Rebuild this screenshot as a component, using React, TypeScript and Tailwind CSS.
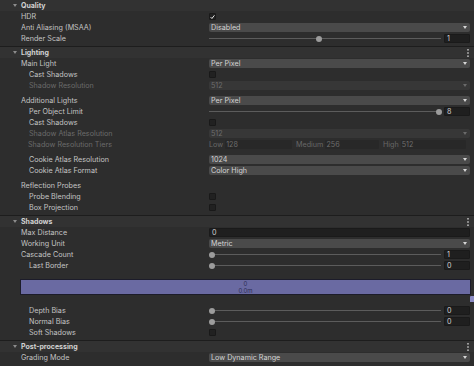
import React from "react";

const LABEL = "text-[#c4c4c4]";
const DIS = "text-[#6b6b6b]";

function Tri() {
  return (
    <svg width="4" height="3" viewBox="0 0 4 3" className="shrink-0">
      <polygon points="0,0 4,0 2,3" fill="#8c8c8c" />
    </svg>
  );
}

function Kebab() {
  return (
    <svg width="2" height="8" viewBox="0 0 2 8" className="ml-auto mr-[5px] shrink-0">
      <rect x="0.3" y="0" width="1.4" height="1.6" fill="#c8c8c8" />
      <rect x="0.3" y="3.2" width="1.4" height="1.6" fill="#c8c8c8" />
      <rect x="0.3" y="6.4" width="1.4" height="1.6" fill="#c8c8c8" />
    </svg>
  );
}

function Header({ title, first, kebab = true }: { title: string; first?: boolean; kebab?: boolean }) {
  return (
    <div
      className={
        first
          ? "flex items-center h-[11px] bg-[#323232] pl-[13px]"
          : "flex items-center h-[12px] mt-[2px] border-t border-[#1d1d1d] bg-[#323232] pl-[13px]"
      }
    >
      <Tri />
      <span className="ml-[4px] font-bold text-[7px] leading-none text-[#d2d2d2]">{title}</span>
      {kebab && <Kebab />}
    </div>
  );
}

function Row({
  label,
  pad,
  disabled,
  children,
}: {
  label: string;
  pad: string;
  disabled?: boolean;
  children?: React.ReactNode;
}) {
  return (
    <div className="flex items-center h-[11px]">
      <div className={"w-[209px] shrink-0 text-[7.2px] leading-none whitespace-nowrap " + pad + " " + (disabled ? DIS : LABEL)}>
        {label}
      </div>
      <div className="flex-1 flex items-center pr-[4px] min-w-0">{children}</div>
    </div>
  );
}

function Arrow({ dim }: { dim?: boolean }) {
  return (
    <svg width="4" height="3" viewBox="0 0 4 3" className="shrink-0">
      <polygon points="0,0 4,0 2,3" fill={dim ? "#6a6a6a" : "#d6d6d6"} />
    </svg>
  );
}

function Dropdown({ value, disabled }: { value: string; disabled?: boolean }) {
  return (
    <div
      className={
        "w-full h-[9px] rounded-[2px] flex items-center justify-between pl-[2px] pr-[3px] text-[7.2px] leading-none " +
        (disabled ? "bg-[#373737] text-[#6e6e6e]" : "bg-[#4a4a4a] text-[#d4d4d4]")
      }
    >
      <span>{value}</span>
      <Arrow dim={disabled} />
    </div>
  );
}

function Check({ checked }: { checked?: boolean }) {
  return (
    <div className="w-[7px] h-[7px] bg-[#212121] border border-[#191919] rounded-[1px] flex items-center justify-center">
      {checked && (
        <svg width="6" height="6" viewBox="0 0 6 6">
          <polyline points="0.8,3.2 2.3,4.8 5.3,1" fill="none" stroke="#e8e8e8" strokeWidth="1.2" />
        </svg>
      )}
    </div>
  );
}

function Field({ value, full }: { value: string; full?: boolean }) {
  return (
    <div
      className={
        (full ? "w-full" : "w-[26px] shrink-0") +
        " h-[9px] bg-[#1f1f1f] border border-[#1a1a1a] rounded-[1px] flex items-center pl-[2px] text-[7.2px] leading-none text-[#d0d0d0]"
      }
    >
      {value}
    </div>
  );
}

function Slider({ value, pos }: { value: string; pos: number }) {
  return (
    <div className="w-full flex items-center gap-[3px]">
      <div className="relative flex-1 h-[9px] flex items-center">
        <div className="w-full h-[1px] bg-[#5c5c5c]" />
        <div
          className="absolute top-[1.5px] w-[6px] h-[6px] rounded-full bg-[#9c9c9c]"
          style={{ left: pos + "px" }}
        />
      </div>
      <Field value={value} />
    </div>
  );
}

function Tier({ label, value }: { label: string; value: string }) {
  return (
    <div className="flex-1 flex items-center min-w-0">
      <span className="text-[7.2px] leading-none text-[#686868] mr-[2px]">{label}</span>
      <div className="flex-1 h-[9px] bg-[#282828] rounded-[1px] flex items-center pl-[1px] text-[7.2px] leading-none text-[#6e6e6e] mr-[4px]">
        {value}
      </div>
    </div>
  );
}

const L1 = "pl-[21px]";
const L2 = "pl-[29px]";

export default function App() {
  return (
    <div
      className="w-[474px] h-[366px] overflow-hidden bg-[#2d2d2d] flex flex-col"
      style={{ fontFamily: "Inter, 'Noto Sans', sans-serif" }}
    >
      <Header title="Quality" first kebab={false} />
      <Row label="HDR" pad={L1}>
        <Check checked />
      </Row>
      <Row label="Anti Aliasing (MSAA)" pad={L1}>
        <Dropdown value="Disabled" />
      </Row>
      <Row label="Render Scale" pad={L1}>
        <Slider value="1" pos={107} />
      </Row>

      <Header title="Lighting" />
      <Row label="Main Light" pad={L1}>
        <Dropdown value="Per Pixel" />
      </Row>
      <Row label="Cast Shadows" pad={L2}>
        <Check />
      </Row>
      <Row label="Shadow Resolution" pad={L2} disabled>
        <Dropdown value="512" disabled />
      </Row>
      <div className="h-[4px] shrink-0" />
      <Row label="Additional Lights" pad={L1}>
        <Dropdown value="Per Pixel" />
      </Row>
      <Row label="Per Object Limit" pad={L2}>
        <Slider value="8" pos={227} />
      </Row>
      <Row label="Cast Shadows" pad={L2}>
        <Check />
      </Row>
      <Row label="Shadow Atlas Resolution" pad={L2} disabled>
        <Dropdown value="512" disabled />
      </Row>
      <Row label="Shadow Resolution Tiers" pad="pl-[28px]" disabled>
        <div className="w-full flex items-center -mr-[4px]">
          <Tier label="Low" value="128" />
          <Tier label="Medium" value="256" />
          <Tier label="High" value="512" />
        </div>
      </Row>
      <div className="h-[4px] shrink-0" />
      <Row label="Cookie Atlas Resolution" pad={L2}>
        <Dropdown value="1024" />
      </Row>
      <Row label="Cookie Atlas Format" pad={L2}>
        <Dropdown value="Color High" />
      </Row>
      <div className="h-[4px] shrink-0" />
      <Row label="Reflection Probes" pad={L1} />
      <Row label="Probe Blending" pad={L2}>
        <Check />
      </Row>
      <Row label="Box Projection" pad={L2}>
        <Check />
      </Row>

      <Header title="Shadows" />
      <Row label="Max Distance" pad={L1}>
        <Field value="0" full />
      </Row>
      <Row label="Working Unit" pad={L1}>
        <Dropdown value="Metric" />
      </Row>
      <Row label="Cascade Count" pad={L1}>
        <Slider value="1" pos={0} />
      </Row>
      <Row label="Last Border" pad={L2}>
        <Slider value="0" pos={0} />
      </Row>

      <div className="mt-[8px] ml-[20px] mr-[3px] h-[16px] shrink-0 bg-[#6a6aa2] border border-[#1c1c2a] flex flex-col items-center justify-center text-[6px] leading-[7px] text-[#2a2a52]">
        <span>0</span>
        <span>0.0m</span>
      </div>
      <div className="h-[10px] shrink-0 flex justify-end">
        <div className="w-[4px] h-[6px] mt-[1px] bg-[#8b8bc4] rounded-tl-[1px]" />
      </div>

      <Row label="Depth Bias" pad={L2}>
        <Slider value="0" pos={0} />
      </Row>
      <Row label="Normal Bias" pad={L2}>
        <Slider value="0" pos={0} />
      </Row>
      <Row label="Soft Shadows" pad={L2}>
        <Check />
      </Row>

      <Header title="Post-processing" />
      <Row label="Grading Mode" pad={L1}>
        <Dropdown value="Low Dynamic Range" />
      </Row>
    </div>
  );
}
